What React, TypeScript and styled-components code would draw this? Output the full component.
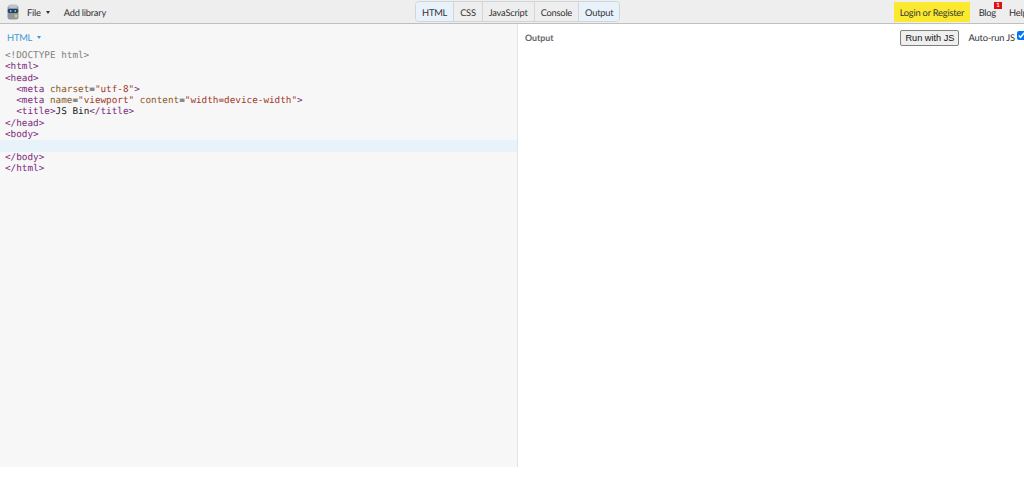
import React from 'react';
import styled, {createGlobalStyle} from 'styled-components';

const Global = createGlobalStyle`
    html, body {
        margin: 0;
        padding: 0;
        background: #fff;
        overflow: hidden;
        text-rendering: geometricPrecision;
    }
`;

const Page = styled.div`
    width: 1024px;
    height: 493px;
    font-family: Lato, "Open Sans", sans-serif;
    font-size: 9.3px;
    letter-spacing: -0.22px;
    color: #333;
    overflow: hidden;
`;

const Toolbar = styled.div`
    height: 23px;
    display: grid;
    grid-template-columns: 415px auto 1fr;
    align-items: center;
    background: #eee;
    border-bottom: 1px solid #bfbfbf;
`;

const LeftMenu = styled.div`
    display: flex;
    align-items: center;
    padding: 1px 0 0 7px;
`;

const Logo = styled.svg`
    width: 12px;
    height: 16px;
    margin-right: 8px;
`;

const MenuItem = styled.span`
    margin-right: 14px;
    white-space: nowrap;
    display: flex;
    align-items: center;
    gap: 5px;
`;

const Caret = styled.span`
    width: 0;
    height: 0;
    border-left: 2px solid transparent;
    border-right: 2px solid transparent;
    border-top: 3px solid ${props => props.color || '#333'};
`;

const Tabs = styled.div`
    display: flex;
    height: 21px;
    box-sizing: border-box;
    border: 1px solid #d0d5d9;
    border-radius: 4px;
    overflow: hidden;
`;

const Tab = styled.div<{$active?: boolean}>`
    display: flex;
    align-items: center;
    padding: 1px 6px 0;
    background: ${props => props.$active ? '#e8f2fb' : '#eee'};
    border-left: 1px solid #d6d6d6;
    &:first-child {
        border-left: 0;
    }
`;

const RightMenu = styled.div`
    display: flex;
    align-items: center;
    justify-content: flex-end;
    height: 100%;
`;

const Login = styled.div`
    background: #fbe92f;
    height: 20px;
    box-sizing: border-box;
    display: flex;
    align-items: center;
    padding: 1px 5.5px 0;
    margin-right: 9px;
    white-space: nowrap;
`;

const BlogLink = styled.div`
    position: relative;
    margin: 1px 13px 0 0;
`;

const Badge = styled.span`
    position: absolute;
    top: -5px;
    right: -6px;
    width: 8px;
    height: 7px;
    line-height: 7px;
    background: #e01010;
    color: #fff;
    font-size: 6px;
    font-weight: 700;
    text-align: center;
`;

const HelpLink = styled.div`
    width: 15px;
    margin-top: 1px;
    white-space: nowrap;
    flex: none;
`;

const Panels = styled.div`
    display: flex;
    height: 443px;
`;

const EditorPanel = styled.div`
    width: 517px;
    background: #f7f7f7;
    border-right: 1px solid #e4e4e4;
    padding-top: 6px;
`;

const PanelLabel = styled.div`
    display: flex;
    align-items: center;
    gap: 5px;
    height: 15px;
    padding-left: 7px;
    color: #3a9ad9;
`;

const Code = styled.div`
    margin-top: 5px;
    font-family: "DejaVu Sans Mono", monospace;
    font-size: 9.33px;
    letter-spacing: 0;
    line-height: 11.3px;
`;

const CodeLine = styled.div<{$current?: boolean}>`
    height: 11.3px;
    padding-left: 5px;
    white-space: pre;
    background: ${props => props.$current ? '#e8f2fb' : 'transparent'};
`;

const Meta = styled.span`color: #808080;`;
const Tag = styled.span`color: #7a2a7e;`;
const Attr = styled.span`color: #8a5a1e;`;
const Str = styled.span`color: #a03a2a;`;
const Plain = styled.span`color: #222;`;

const OutputPanel = styled.div`
    flex: 1;
    min-width: 0;
`;

const OutputHeader = styled.div`
    display: flex;
    align-items: center;
    height: 15px;
    padding: 6px 0 0 7px;
`;

const OutputLabel = styled.span`
    font-weight: 700;
    color: #666;
    font-size: 8.8px;
    letter-spacing: 0;
    flex: 1;
`;

const RunButton = styled.button`
    height: 16px;
    width: 59px;
    padding: 0;
    margin-right: 9px;
    font-family: "Liberation Sans", sans-serif;
    font-size: 9.2px;
    color: #111;
    background: #efefef;
    border: 1px solid #808080;
    border-radius: 2px;
`;

const AutoRun = styled.label`
    display: flex;
    align-items: center;
    gap: 2px;
    letter-spacing: -0.15px;
    white-space: nowrap;
`;

const AutoCheck = styled.input`
    width: 9px;
    height: 9px;
    margin: -4px -2px 0 0;
    accent-color: #0075ff;
    flex: none;
`;

const CloseTag: React.FC<{name: string}> = ({name}) => <Tag>{`</${name}>`}</Tag>;
const OpenTag: React.FC<{name: string}> = ({name}) => <Tag>{`<${name}>`}</Tag>;

export const App: React.FC = () => {
    return (
        <Page>
            <Global/>
            <Toolbar>
                <LeftMenu>
                    <Logo viewBox="0 0 12 16">
                        <rect x="0.5" y="1.5" width="11" height="14" rx="2.5" fill="#8d97a1"/>
                        <ellipse cx="6" cy="2.2" rx="5" ry="1.9" fill="#bcc3c9"/>
                        <rect x="0.8" y="5" width="10.4" height="4" rx="1.4" fill="#27405c"/>
                        <circle cx="3.7" cy="7" r="0.9" fill="#8fc3e8"/>
                        <circle cx="8.3" cy="7" r="0.9" fill="#8fc3e8"/>
                        <path d="M7.5 10.5l3 0 -.4 3 -2.2 0z" fill="#e8c84a"/>
                    </Logo>
                    <MenuItem>File <Caret/></MenuItem>
                    <MenuItem>Add library</MenuItem>
                </LeftMenu>
                <Tabs>
                    <Tab $active>HTML</Tab>
                    <Tab>CSS</Tab>
                    <Tab>JavaScript</Tab>
                    <Tab>Console</Tab>
                    <Tab $active>Output</Tab>
                </Tabs>
                <RightMenu>
                    <Login>Login or Register</Login>
                    <BlogLink>Blog<Badge>1</Badge></BlogLink>
                    <HelpLink>Help</HelpLink>
                </RightMenu>
            </Toolbar>
            <Panels>
                <EditorPanel>
                    <PanelLabel>HTML <Caret color="#3a9ad9"/></PanelLabel>
                    <Code>
                        <CodeLine><Meta>{'<!DOCTYPE html>'}</Meta></CodeLine>
                        <CodeLine><OpenTag name="html"/></CodeLine>
                        <CodeLine><OpenTag name="head"/></CodeLine>
                        <CodeLine>{'  '}<Tag>{'<meta '}</Tag><Attr>charset</Attr>=<Str>"utf-8"</Str><Tag>{'>'}</Tag></CodeLine>
                        <CodeLine>{'  '}<Tag>{'<meta '}</Tag><Attr>name</Attr>=<Str>"viewport"</Str> <Attr>content</Attr>=<Str>"width=device-width"</Str><Tag>{'>'}</Tag></CodeLine>
                        <CodeLine>{'  '}<OpenTag name="title"/><Plain>JS Bin</Plain><CloseTag name="title"/></CodeLine>
                        <CodeLine><CloseTag name="head"/></CodeLine>
                        <CodeLine><OpenTag name="body"/></CodeLine>
                        <CodeLine $current>{' '}</CodeLine>
                        <CodeLine><CloseTag name="body"/></CodeLine>
                        <CodeLine><CloseTag name="html"/></CodeLine>
                    </Code>
                </EditorPanel>
                <OutputPanel>
                    <OutputHeader>
                        <OutputLabel>Output</OutputLabel>
                        <RunButton>Run with JS</RunButton>
                        <AutoRun>Auto-run JS<AutoCheck type="checkbox" defaultChecked/></AutoRun>
                    </OutputHeader>
                </OutputPanel>
            </Panels>
        </Page>
    );
}

export default App;
